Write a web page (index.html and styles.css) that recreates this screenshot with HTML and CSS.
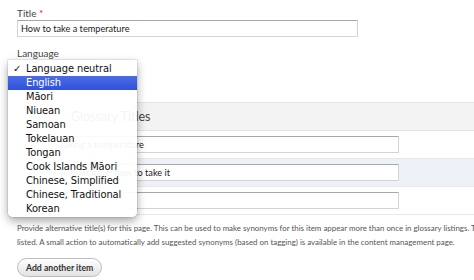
FILE: index.html
```html
<!DOCTYPE html>
<html lang="en">
<head>
    <meta charset="UTF-8">
    <title>Glossary item</title>
    <link rel="stylesheet" href="styles.css">
</head>
<body>

<div class="form-item">
    <label>Title <span class="req">*</span></label>
    <input type="text" class="text title-input" value="How to take a temperature">
</div>

<div class="form-item">
    <label>Language</label>
    <!-- the native select sits under the open menu -->
    <div class="select-box"></div>
</div>

<!-- multi-value field -->
<table class="multi">
    <tr class="head">
        <th colspan="2">Glossary Titles</th>
    </tr>
    <tr class="odd">
        <td class="drag"></td>
        <td><input type="text" class="text" value="Taking a temperature"></td>
    </tr>
    <tr class="even">
        <td class="drag"></td>
        <td><input type="text" class="text" value="Temperature: how to take it"></td>
    </tr>
    <tr class="odd">
        <td class="drag"></td>
        <td><input type="text" class="text" value=""></td>
    </tr>
</table>

<div class="description">
    <div class="line">Provide alternative title(s) for this page. This can be used to make synonyms for this item appear more than once in glossary listings. This is how the item will be</div>
    <div class="line">listed. A small action to automatically add suggested synonyms (based on tagging) is available in the content management page.</div>
</div>

<button class="btn">Add another item</button>

<!-- open language menu -->
<ul class="menu">
    <li class="checked">Language neutral</li>
    <li class="active">English</li>
    <li>Māori</li>
    <li>Niuean</li>
    <li>Samoan</li>
    <li>Tokelauan</li>
    <li>Tongan</li>
    <li>Cook Islands Māori</li>
    <li>Chinese, Simplified</li>
    <li>Chinese, Traditional</li>
    <li>Korean</li>
</ul>

</body>
</html>
```

FILE: styles.css
```css
body {
    margin: 0;
    padding: 6px 0 0 17px;
    font-family: Lato, "Open Sans", sans-serif;
    font-size: 10px;
    color: #333;
    background: #fff;
    overflow: hidden;
    position: relative;
    height: 280px;
    box-sizing: border-box;
}
.form-item {
    margin-bottom: 9px;
}
.form-item label {
    display: block;
    font-size: 10px;
    line-height: 14px;
    color: #444;
}
.req {
    color: #d22;
}
input.text {
    display: block;
    box-sizing: border-box;
    height: 17px;
    padding: 0 3px;
    border: 1px solid #d4d4d4;
    border-top-color: #a8a8a8;
    font-family: Lato, "Open Sans", sans-serif;
    font-size: 9.2px;
    color: #222;
    background: #fff;
}
.title-input {
    width: 341px;
}
.select-box {
    height: 18px;
    width: 110px;
}
table.multi {
    border-collapse: collapse;
    width: 457px;
    margin-top: 24px;
}
table.multi th {
    height: 27px;
    background: #f3f3f3;
    border-top: 1px solid #e4e4e4;
    border-bottom: 1px solid #e4e4e4;
    text-align: left;
    font-weight: normal;
    font-size: 12.5px;
    color: #444;
    padding: 0 0 0 54px;
}
table.multi td {
    height: 27px;
    border-bottom: 1px solid #e8e8e8;
    padding: 0;
}
table.multi tr.even td {
    background: #eef2f8;
}
td.drag {
    width: 38px;
}
table.multi input.text {
    width: 344px;
}
.description {
    margin-top: 6px;
    font-size: 7.9px;
    line-height: 14px;
    color: #555;
    white-space: nowrap;
}
.btn {
    margin-top: 9px;
    height: 19px;
    padding: 0 8px;
    border: 1px solid #bdbdbd;
    border-radius: 10px;
    background: linear-gradient(#ffffff, #e2e2e2);
    font-family: Lato, "Open Sans", sans-serif;
    font-weight: bold;
    font-size: 8.7px;
    color: #333;
}
.menu {
    position: absolute;
    left: 8px;
    top: 60px;
    width: 129px;
    margin: 0;
    padding: 2px 0 1px;
    list-style: none;
    background: rgba(255, 255, 255, 0.94);
    border-radius: 0 0 5px 5px;
    box-shadow: 0 4px 10px rgba(0, 0, 0, 0.35), 0 0 0 1px rgba(0, 0, 0, 0.08);
    font-family: "DejaVu Sans", sans-serif;
    font-size: 9.9px;
    letter-spacing: -0.1px;
    color: #111;
}
.menu li {
    height: 14px;
    line-height: 14px;
    padding-left: 18px;
    position: relative;
}
.menu li.checked::before {
    content: "✓";
    position: absolute;
    left: 5px;
}
.menu li.active {
    background: linear-gradient(#4a6ce8, #2f52d8);
    color: #fff;
}
```
